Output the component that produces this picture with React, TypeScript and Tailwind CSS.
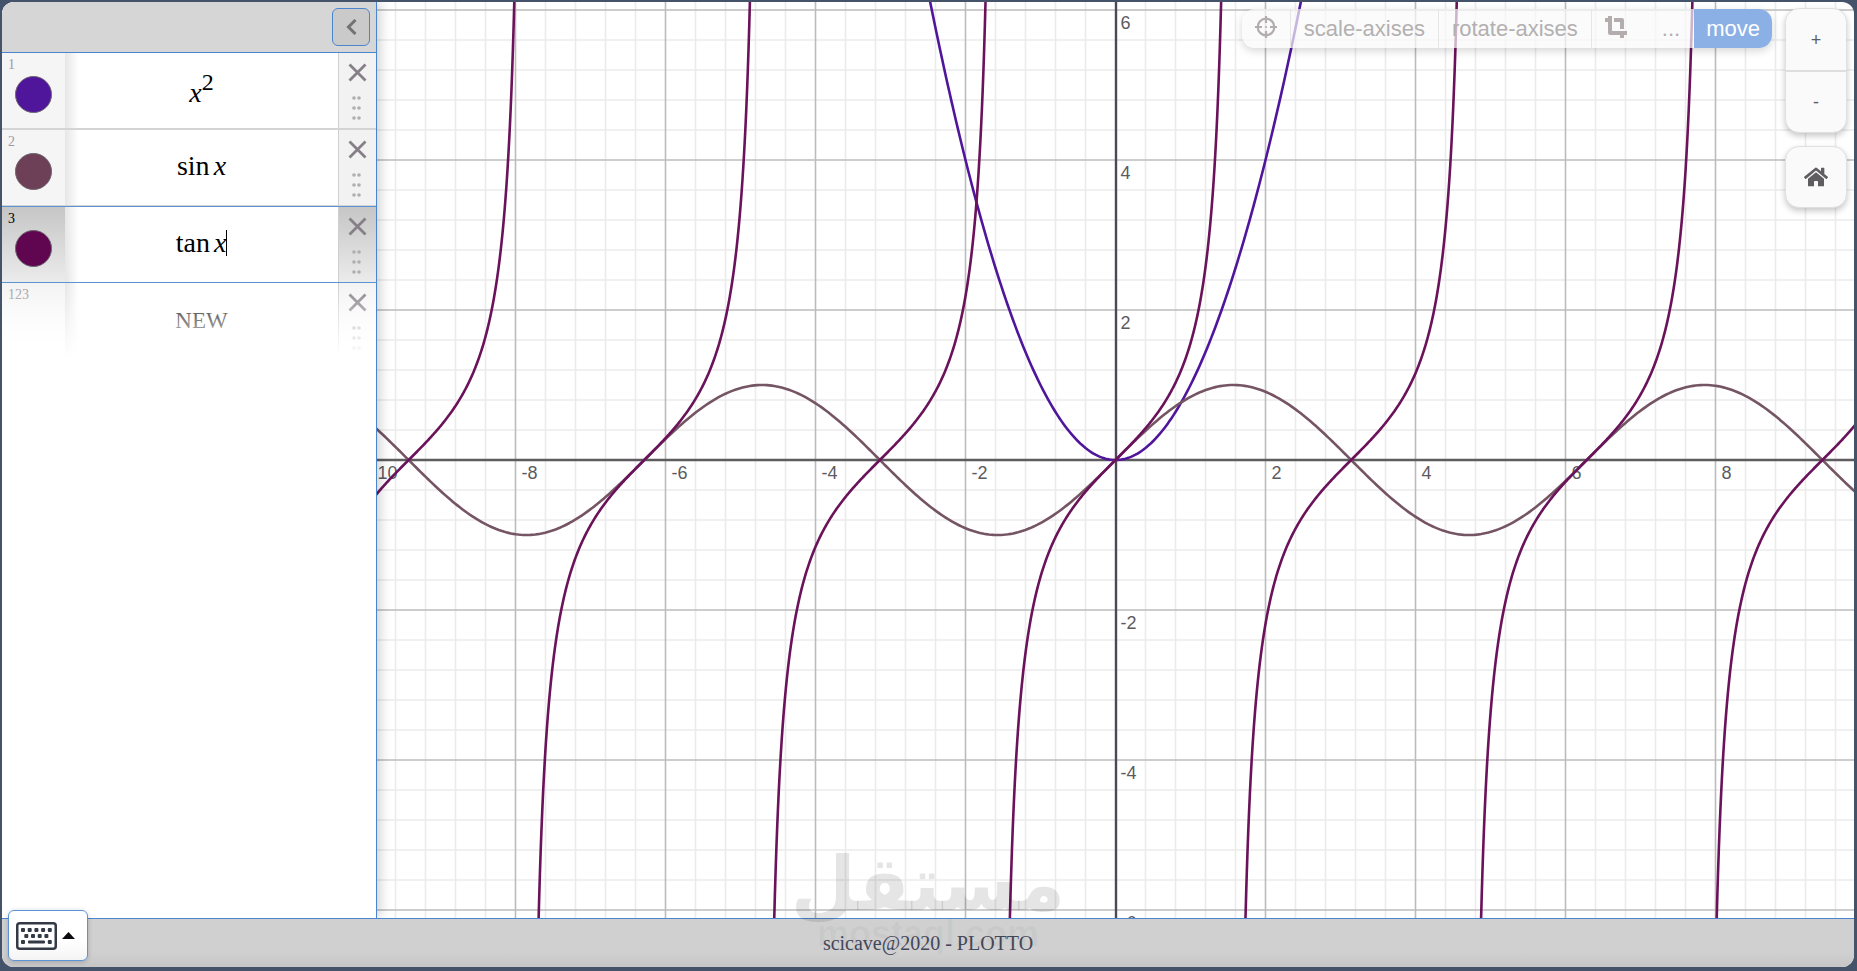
import React from 'react';
import { FaHome } from 'react-icons/fa';

const UNIT = 75;
const MINOR = 30;

type Fn = (x: number) => number;

const plot = (fn: Fn, from: number, to: number, steps = 300) => {
  const points: string[] = [];
  for (let i = 0; i <= steps; i++) {
    const x = from + ((to - from) * i) / steps;
    points.push(`${(x * UNIT).toFixed(2)},${(-fn(x) * UNIT).toFixed(2)}`);
  }
  return points.join(' ');
};

const range = (from: number, to: number) => Array.from({ length: to - from + 1 }, (_, i) => from + i);

const PARABOLA = plot((x) => x * x, -4, 4);
const SINE = plot(Math.sin, -26, 26, 1600);
const TAN_REACH = Math.atan(14);
const TANGENTS = range(-8, 8).map((k) => plot(Math.tan, k * Math.PI - TAN_REACH, k * Math.PI + TAN_REACH));

const Graph: React.FC = () => {
  const minors = range(-64, 64).filter((n) => n % 5 !== 0);
  const majors = range(-12, 12).filter((n) => n !== 0);
  const xLabels = range(-5, 4).filter((n) => n !== 0);
  const yLabels = range(-3, 3).filter((n) => n !== 0);

  return (
    <svg className="block w-full h-full" role="img" aria-label="Graph of x squared, sin x and tan x">
      <svg x="50%" y="50%" overflow="visible">
        <g strokeWidth="1.6">
          <g stroke="#ebebeb">
            {minors.map((n) => (
              <React.Fragment key={n}>
                <line x1={n * MINOR} x2={n * MINOR} y1="-2000" y2="2000" />
                <line y1={n * MINOR} y2={n * MINOR} x1="-2000" x2="2000" />
              </React.Fragment>
            ))}
          </g>
          <g stroke="#bcbcbc">
            {majors.map((n) => (
              <React.Fragment key={n}>
                <line x1={n * 150} x2={n * 150} y1="-2000" y2="2000" />
                <line y1={n * 150} y2={n * 150} x1="-2000" x2="2000" />
              </React.Fragment>
            ))}
          </g>
        </g>
        <g strokeWidth="2.4">
          <line x1="-2000" x2="2000" y1="0" y2="0" stroke="#5e5c5e" />
          <line x1="0.5" x2="0.5" y1="-2000" y2="2000" stroke="#4b485c" />
        </g>
        <g fill="#5c5a60" fontSize="18" fontFamily="'Liberation Sans', Arial, sans-serif">
          {xLabels.map((n) => (
            <text key={n} x={n * 150 + 6} y="19">{n * 2}</text>
          ))}
          {yLabels.map((n) => (
            <text key={n} x="5" y={-n * 150 + 19}>{n * 2}</text>
          ))}
        </g>
        <g fill="none" strokeWidth="2.6" strokeLinejoin="round">
          <polyline points={PARABOLA} stroke="#4f169c" />
          <polyline points={SINE} stroke="#755464" />
          {TANGENTS.map((points, i) => (
            <polyline key={i} points={points} stroke="#6a125a" />
          ))}
        </g>
      </svg>
    </svg>
  );
};

interface RowProps {
  label: string;
  color?: string;
  active?: boolean;
  fresh?: boolean;
  frame: string;
  children: React.ReactNode;
}

const Row: React.FC<RowProps> = ({ label, color, active, fresh, frame, children }) => {
  const gutter = active
    ? 'bg-linear-to-b from-[#c6c6c6] to-[#ebebeb]'
    : fresh
      ? 'bg-linear-to-b from-[#f3f3f3] to-white'
      : 'bg-[#f5f5f5]';

  return (
    <li className={`relative flex box-content h-[75px] ${frame}`}>
      <div className={`relative w-[63px] shrink-0 ${gutter}`}>
        <span className={`absolute left-[6px] top-1 text-sm leading-4 ${active ? 'text-black' : 'text-[#9d9aa5]'}`}>{label}</span>
        {color && (
          <button
            aria-label={`Color of expression ${label}`}
            className={`absolute left-[13px] top-[23px] w-[37px] h-[37px] rounded-full border border-[#6d6470] ${color}`}
          />
        )}
      </div>
      <div className="flex-1 flex items-center justify-center bg-linear-to-r from-[#e6e6e6] via-white via-[5%] to-white">
        {children}
      </div>
      <div className={`w-[38px] shrink-0 border-l border-[#cfcfcf] flex flex-col items-center pt-[10px] gap-[14px] ${active || fresh ? gutter : 'bg-[#f2f2f2]'}`}>
        <button aria-label={`Delete expression ${label}`}>
          <svg className="w-[19px] h-[19px]" viewBox="0 0 19 19" fill="none" stroke="#867f87" strokeWidth="2.8">
            <path d="M1.5 1.5L17.5 17.5M17.5 1.5L1.5 17.5" />
          </svg>
        </button>
        <svg className="w-[11px] h-[24px] cursor-move" viewBox="0 0 11 24" fill="#b0aeb0">
          {[2, 12, 22].map((y) => (
            <React.Fragment key={y}>
              <circle cx="2" cy={y} r="1.8" />
              <circle cx="7" cy={y} r="1.8" />
            </React.Fragment>
          ))}
        </svg>
      </div>
      {fresh && <div className="absolute inset-0 pointer-events-none bg-linear-to-b from-transparent to-white" />}
    </li>
  );
};

const Sidebar: React.FC = () => (
  <aside className="relative z-10 w-[375px] shrink-0 flex flex-col bg-white border-r border-[#4a86cf] shadow-[2px_0_12px_rgba(0,0,0,0.22)]">
    <header className="h-[51px] shrink-0 flex items-center justify-end px-[6px] bg-[#d6d6d6] border-b border-[#4a86cf]">
      <button aria-label="Collapse panel" className="w-[38px] h-[38px] flex items-center justify-center rounded-md border border-[#4a86cf] bg-[#cacaca]">
        <svg className="w-[11px] h-4" viewBox="0 0 11 16" fill="none" stroke="#737173" strokeWidth="3">
          <path d="M9.5 1L2.5 8L9.5 15" />
        </svg>
      </button>
    </header>
    <ul className="text-[28px] leading-8 text-black">
      <Row label="1" color="bg-[#4f159b]" frame="border-b-2 border-[#d4d4d4]">
        <div role="textbox" aria-label="Expression 1" tabIndex={0} className="pt-1">
          <i>x</i><sup className="text-2xl leading-none -top-3">2</sup>
        </div>
      </Row>
      <Row label="2" color="bg-[#6e4058]" frame="border-b border-[#d4d4d4]">
        <div role="textbox" aria-label="Expression 2" tabIndex={0} className="flex gap-1 pb-1">
          sin<i>x</i>
        </div>
      </Row>
      <Row label="3" color="bg-[#600650]" active frame="border-y border-[#5b93d3]">
        <div role="textbox" aria-label="Expression 3" tabIndex={0} className="flex items-center gap-1 pb-1">
          tan
          <span className="flex items-center"><i>x</i><span className="w-px h-[26px] bg-black" /></span>
        </div>
      </Row>
      <Row label="123" fresh frame="">
        <input aria-label="New expression" placeholder="NEW" className="w-full text-center text-[23px] leading-8 outline-none placeholder:text-black" />
      </Row>
    </ul>
  </aside>
);

const Toolbar: React.FC = () => (
  <div className="flex h-[39px] mt-px rounded-[13px] overflow-hidden bg-[#f9f9f9]/70 text-[22px] leading-none text-[#b3b0b1] font-['Liberation_Sans',Arial,sans-serif] shadow-[0_3px_8px_rgba(0,0,0,0.16)]">
    <button aria-label="Center" className="px-[13px] border-r border-[#e6e6e6]">
      <svg className="w-[22px] h-[22px] -mt-1" viewBox="0 0 22 22" fill="none" stroke="#b3adae" strokeWidth="2.2">
        <circle cx="11" cy="11" r="8.3" />
        <path d="M11 0V7M11 15V22M0 11H7M15 11H22" />
        <circle cx="11" cy="11" r="1.1" fill="#b3adae" stroke="none" />
      </svg>
    </button>
    <button className="px-[13px] border-r border-[#e6e6e6]">scale-axises</button>
    <button className="px-[13px] border-r border-[#e6e6e6]">rotate-axises</button>
    <button aria-label="Crop" className="px-[13px]">
      <svg className="w-[22px] h-[22px] -mt-1" viewBox="0 0 22 22" fill="none" stroke="#b3adae" strokeWidth="4" strokeLinejoin="round">
        <path d="M0 4H3M5 0V17H22M9 4H17V13M17 19V22" />
      </svg>
    </button>
    <button aria-label="More" className="pl-[22px] pr-[14px]">...</button>
    <button className="px-3 bg-[#8bb0e5] text-white">move</button>
  </div>
);

const ViewButtons: React.FC = () => {
  const card = 'flex flex-col w-[62px] rounded-[14px] border border-[#e0e0e0] bg-[#fafafa] text-[#5f5d5f] shadow-[0_3px_6px_rgba(0,0,0,0.22)]';
  return (
    <div className="flex flex-col gap-[13px] font-['Liberation_Sans',Arial,sans-serif] text-lg">
      <div className={card}>
        <button aria-label="Zoom in" className="h-[63px] border-b-2 border-[#dedede]">+</button>
        <button aria-label="Zoom out" className="h-[60px]">-</button>
      </div>
      <div className={card}>
        <button aria-label="Home" className="h-[60px] flex items-center justify-center">
          <FaHome size={24} />
        </button>
      </div>
    </div>
  );
};

const KeyboardIcon: React.FC = () => (
  <svg className="w-[41px] h-[28px]" viewBox="0 0 41 28" fill="#343946">
    <rect x="1.25" y="1.25" width="38.5" height="25.5" rx="2.5" fill="none" stroke="#343946" strokeWidth="2.5" />
    {[7, 13.7, 20.4, 27.1, 33.8].map((x) => (
      <rect key={x} x={x - 2} y="6" width="4" height="4" rx="1" />
    ))}
    {[10.3, 17, 23.7, 30.4].map((x) => (
      <rect key={x} x={x - 2} y="12" width="4" height="4" rx="1" />
    ))}
    <rect x="5" y="18" width="4" height="4" rx="1" />
    <rect x="12" y="18.5" width="17" height="3" rx="1" />
    <rect x="31.8" y="18" width="4" height="4" rx="1" />
  </svg>
);

const Watermark: React.FC = () => (
  <div className="absolute inset-x-0 bottom-[15px] z-20 flex flex-col items-center pointer-events-none select-none font-bold">
    <span lang="ar" dir="rtl" className="font-['DejaVu_Sans',sans-serif] text-[75px] leading-[64px] text-black/10">مستقل</span>
    <span className="font-['Liberation_Sans',Arial,sans-serif] text-4xl leading-9 text-black/4">mostaql.com</span>
  </div>
);

const App: React.FC = () => {
  return (
    <div className="h-screen bg-[#44536a] pt-[2px] pr-[3px] pb-1 pl-[2px] font-['Liberation_Serif','Times_New_Roman',serif]">
      <div className="relative h-full flex flex-col rounded-xl overflow-hidden bg-white">
        <div className="flex-1 min-h-0 flex">
          <Sidebar />
          <main className="relative flex-1 min-w-0">
            <Graph />
            <div className="absolute top-[6px] right-[7px] flex items-start gap-[13px]">
              <Toolbar />
              <ViewButtons />
            </div>
          </main>
        </div>
        <footer className="relative z-10 h-[49px] shrink-0 flex items-center justify-center border-t border-[#4a86cf] bg-linear-to-b from-[#d0d0d0] from-70% to-[#c6c6c6] text-xl text-[#45475a]">
          scicave@2020 - PLOTTO
          <button
            aria-label="Toggle keyboard"
            className="absolute left-[6px] bottom-[6px] w-[80px] h-[51px] flex items-center pl-[7px] gap-[5px] rounded-md border border-[#5b93d9] bg-linear-to-b from-white from-60% to-[#f4f4f4] shadow-[0_1px_5px_rgba(0,0,0,0.2)]"
          >
            <KeyboardIcon />
            <svg className="w-[13px] h-[7px]" viewBox="0 0 13 7" fill="#0d0a10">
              <path d="M0 7L6.5 0L13 7Z" />
            </svg>
          </button>
        </footer>
        <Watermark />
      </div>
    </div>
  );
};

export default App;
